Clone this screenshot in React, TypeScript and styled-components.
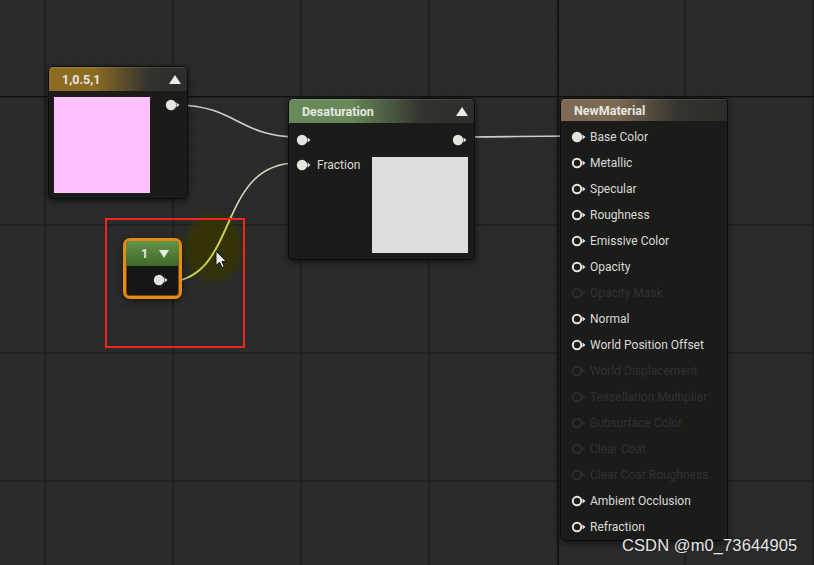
import React from 'react';
import styled, { createGlobalStyle } from 'styled-components';

type PinKind = 'filled' | 'hollow' | 'off';

interface MaterialInput {
  label: string;
  enabled: boolean;
}

const materialInputs: MaterialInput[] = [
  { label: 'Base Color', enabled: true },
  { label: 'Metallic', enabled: true },
  { label: 'Specular', enabled: true },
  { label: 'Roughness', enabled: true },
  { label: 'Emissive Color', enabled: true },
  { label: 'Opacity', enabled: true },
  { label: 'Opacity Mask', enabled: false },
  { label: 'Normal', enabled: true },
  { label: 'World Position Offset', enabled: true },
  { label: 'World Displacement', enabled: false },
  { label: 'Tessellation Multiplier', enabled: false },
  { label: 'Subsurface Color', enabled: false },
  { label: 'Clear Coat', enabled: false },
  { label: 'Clear Coat Roughness', enabled: false },
  { label: 'Ambient Occlusion', enabled: true },
  { label: 'Refraction', enabled: true },
];

const GlobalStyle = createGlobalStyle`
  html, body {
    margin: 0;
    padding: 0;
    background: #2a2b2a;
  }
  body {
    font-family: Roboto, 'Liberation Sans', sans-serif;
  }
  * {
    box-sizing: border-box;
  }
`;

const Canvas = styled.div`
  position: relative;
  width: 814px;
  height: 565px;
  overflow: hidden;
  background-color: #2a2b2a;
  background-image:
    linear-gradient(#101010, #101010),
    linear-gradient(#101010, #101010),
    linear-gradient(to right, #1f201f 0 2px, transparent 2px),
    linear-gradient(to bottom, #1f201f 0 2px, transparent 2px),
    linear-gradient(to right, rgba(0, 0, 0, 0.08) 0 1px, transparent 1px),
    linear-gradient(to bottom, rgba(0, 0, 0, 0.08) 0 1px, transparent 1px);
  background-size: 1px 100%, 100% 1px, 128px 100%, 100% 128px, 16px 100%, 100% 16px;
  background-position: 558px 0, 0 96px, 44px 0, 0 96px, 12px 0, 0 0;
  background-repeat: no-repeat, no-repeat, repeat-x, repeat-y, repeat-x, repeat-y;
`;

const Glow = styled.div`
  position: absolute;
  left: 179px;
  top: 209px;
  width: 68px;
  height: 78px;
  border-radius: 50%;
  background: radial-gradient(closest-side, rgba(52, 51, 6, 0.97) 68%, rgba(52, 51, 6, 0) 100%);
`;

const Wires = styled.svg`
  position: absolute;
  left: 0;
  top: 0;
  pointer-events: none;
`;

const Node = styled.div<{ $x: number; $y: number; $w: number }>`
  position: absolute;
  left: ${p => p.$x}px;
  top: ${p => p.$y}px;
  width: ${p => p.$w}px;
  background: #1b1b1a;
  border: 1px solid #0c0c0c;
  border-radius: 5px;
  box-shadow: 0 2px 6px rgba(0, 0, 0, 0.55);
  overflow: hidden;
`;

const Header = styled.div<{ $tint: string; $h: number }>`
  display: flex;
  align-items: center;
  justify-content: space-between;
  height: ${p => p.$h}px;
  padding: 0 6px 0 13px;
  background: linear-gradient(
    to right,
    ${p => p.$tint} 0%,
    ${p => p.$tint} 32%,
    #33332f 72%,
    #2c2c2a 100%
  );
  box-shadow: inset 0 1px 0 rgba(255, 255, 255, 0.12);
  color: #e6e6e2;
  font-size: 12.5px;
  font-weight: 700;
`;

const Collapse = styled.span`
  width: 0;
  height: 0;
  border-left: 6px solid transparent;
  border-right: 6px solid transparent;
  border-bottom: 9px solid #ececec;
`;

const VectorBody = styled.div`
  display: flex;
  align-items: flex-start;
  padding: 6px 0 5px 5px;
`;

const Swatch = styled.div<{ $color: string }>`
  width: 96px;
  height: 96px;
  background: ${p => p.$color};
`;

const SwatchPin = styled.div`
  display: flex;
  align-items: center;
  height: 16px;
  margin-left: 15px;
`;

const DesatBody = styled.div`
  display: grid;
  grid-template-columns: 1fr auto;
  padding: 4px 6px 6px 7px;
`;

const PinColumn = styled.div`
  display: flex;
  flex-direction: column;
`;

const PinRow = styled.div<{ $end?: boolean }>`
  display: flex;
  align-items: center;
  justify-content: ${p => (p.$end ? 'flex-end' : 'flex-start')};
  gap: 5px;
  height: 25px;
  color: #dcdcd8;
  font-size: 12px;
`;

const Preview = styled.div`
  width: 96px;
  height: 96px;
  margin-top: 5px;
  background: #dcdedb;
`;

const MaterialBody = styled.div`
  display: flex;
  flex-direction: column;
  padding: 3px 0 0 10px;
`;

const InputRow = styled.div<{ $off: boolean }>`
  display: flex;
  align-items: center;
  gap: 3px;
  height: 26px;
  color: ${p => (p.$off ? '#323230' : '#dadad6')};
  font-size: 12px;
  white-space: nowrap;
`;

const ConstNode = styled.div`
  position: absolute;
  left: 123px;
  top: 238px;
  width: 59px;
  height: 61px;
  display: flex;
  flex-direction: column;
  border: 3px solid #e48c14;
  border-radius: 7px;
  background: #161616;
  box-shadow: inset 0 0 0 1px #7a4300, 0 2px 6px rgba(0, 0, 0, 0.5);
  overflow: hidden;
`;

const ConstHeader = styled.div`
  display: flex;
  align-items: center;
  gap: 11px;
  height: 25px;
  padding-left: 15px;
  background: linear-gradient(to bottom, #66934b 0%, #4f7b37 55%, #41682c 100%);
  color: #e8ece4;
  font-size: 12.5px;
  font-weight: 700;
`;

const Expand = styled.span`
  width: 0;
  height: 0;
  border-left: 5px solid transparent;
  border-right: 5px solid transparent;
  border-top: 8px solid #e6eee0;
`;

const ConstBody = styled.div`
  flex: 1;
  display: flex;
  align-items: center;
  justify-content: flex-end;
  padding: 0 10px 2px 0;
`;

const Selection = styled.div`
  position: absolute;
  left: 105px;
  top: 218px;
  width: 140px;
  height: 130px;
  border: 2px solid #f0261c;
`;

const Cursor = styled.svg`
  position: absolute;
  left: 215px;
  top: 250px;
`;

const Watermark = styled.div`
  position: absolute;
  left: 622px;
  top: 536px;
  color: #e6e6e6;
  font-family: 'Liberation Sans', Arial, sans-serif;
  font-size: 16.5px;
  letter-spacing: 0.1px;
  text-shadow: 0 0 2px rgba(0, 0, 0, 0.6);
  white-space: nowrap;
`;

const Pin: React.FC<{ kind: PinKind }> = ({ kind }) => {
  const color = kind === 'off' ? '#2e2e2c' : '#e4e4e0';
  return (
    <svg width="16" height="12" viewBox="0 0 16 12">
      {kind === 'filled' ? (
        <circle cx="6" cy="6" r="5.2" fill={color} />
      ) : (
        <circle cx="6" cy="6" r="4.2" fill="none" stroke={color} strokeWidth="2" />
      )}
      <polygon points="11.5,3.6 14.5,6 11.5,8.4" fill={color} />
    </svg>
  );
};

const App: React.FC = () => {
  return (
    <>
      <GlobalStyle />
      <Canvas>
        <Glow />

        <Wires width="814" height="565" viewBox="0 0 814 565">
          <defs>
            <clipPath id="hover">
              <circle cx="212" cy="248" r="38" />
            </clipPath>
          </defs>
          <g fill="none" strokeWidth="1.6" strokeLinecap="round">
            <path d="M176,105 C235,105 240,137 297,137" stroke="#cfcfc8" />
            <path d="M464,137 C517,137 517,136 571,136" stroke="#cfcfc8" />
            <path d="M166,282 C240,282 215,163 297,163" stroke="#d6d4c4" />
            <path
              d="M166,282 C240,282 215,163 297,163"
              stroke="#c9ca3c"
              strokeWidth="1.8"
              clipPath="url(#hover)"
            />
          </g>
        </Wires>

        <Node $x={48} $y={66} $w={140}>
          <Header $tint="#8d6c22" $h={24}>
            1,0.5,1
            <Collapse />
          </Header>
          <VectorBody>
            <Swatch $color="#ffc1ff" />
            <SwatchPin>
              <Pin kind="filled" />
            </SwatchPin>
          </VectorBody>
        </Node>

        <Node $x={288} $y={98} $w={187}>
          <Header $tint="#688a58" $h={24}>
            Desaturation
            <Collapse />
          </Header>
          <DesatBody>
            <PinColumn>
              <PinRow>
                <Pin kind="filled" />
              </PinRow>
              <PinRow>
                <Pin kind="filled" />
                Fraction
              </PinRow>
            </PinColumn>
            <PinColumn>
              <PinRow $end>
                <Pin kind="filled" />
              </PinRow>
              <Preview />
            </PinColumn>
          </DesatBody>
        </Node>

        <Node $x={560} $y={98} $w={168}>
          <Header $tint="#7e6a54" $h={22}>
            NewMaterial
          </Header>
          <MaterialBody>
            {materialInputs.map((input, i) => (
              <InputRow key={input.label} $off={!input.enabled}>
                <Pin kind={i === 0 ? 'filled' : input.enabled ? 'hollow' : 'off'} />
                {input.label}
              </InputRow>
            ))}
          </MaterialBody>
        </Node>

        <ConstNode>
          <ConstHeader>
            1
            <Expand />
          </ConstHeader>
          <ConstBody>
            <Pin kind="filled" />
          </ConstBody>
        </ConstNode>

        <Selection />

        <Cursor width="12" height="19" viewBox="0 0 12 19">
          <path
            d="M1,1 L1,15.5 L4.6,12.2 L7,17.6 L9.2,16.6 L6.9,11.4 L11.2,11.4 Z"
            fill="#f4f4f4"
            stroke="#111"
            strokeWidth="1"
            strokeLinejoin="round"
          />
        </Cursor>

        <Watermark>CSDN @m0_73644905</Watermark>
      </Canvas>
    </>
  );
};

export default App;
